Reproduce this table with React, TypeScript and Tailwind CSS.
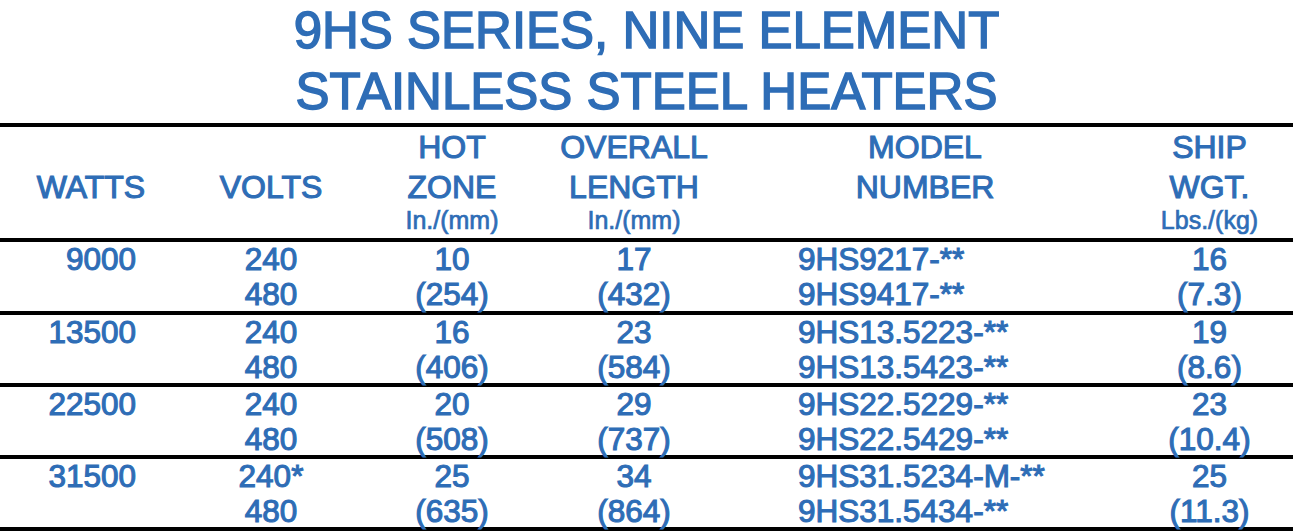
import React from "react";

type Group = {
  watts: string;
  volts: [string, string];
  hot: [string, string];
  overall: [string, string];
  model: [string, string];
  ship: [string, string];
};

const groups: Group[] = [
  { watts: "9000", volts: ["240", "480"], hot: ["10", "(254)"], overall: ["17", "(432)"], model: ["9HS9217-**", "9HS9417-**"], ship: ["16", "(7.3)"] },
  { watts: "13500", volts: ["240", "480"], hot: ["16", "(406)"], overall: ["23", "(584)"], model: ["9HS13.5223-**", "9HS13.5423-**"], ship: ["19", "(8.6)"] },
  { watts: "22500", volts: ["240", "480"], hot: ["20", "(508)"], overall: ["29", "(737)"], model: ["9HS22.5229-**", "9HS22.5429-**"], ship: ["23", "(10.4)"] },
  { watts: "31500", volts: ["240*", "480"], hot: ["25", "(635)"], overall: ["34", "(864)"], model: ["9HS31.5234-M-**", "9HS31.5434-**"], ship: ["25", "(11.3)"] },
];

const cols = "grid grid-cols-[182px_178px_184px_180px_402px_1fr]";

function HeadCell({ l1, l2, l3 }: { l1?: string; l2?: string; l3?: string }) {
  return (
    <div className="flex flex-col items-center">
      <div className="h-[40px] text-[32px] leading-[40px] whitespace-nowrap [-webkit-text-stroke:1.1px_currentColor]">{l1 ?? ""}</div>
      <div className="h-[40px] text-[32px] leading-[40px] whitespace-nowrap [-webkit-text-stroke:1.1px_currentColor]">{l2 ?? ""}</div>
      <div className="h-[27px] text-[25px] leading-[27px] whitespace-nowrap [-webkit-text-stroke:0.7px_currentColor]">{l3 ?? ""}</div>
    </div>
  );
}

function Lines({ items, className }: { items: string[]; className: string }) {
  return (
    <div className={className}>
      {items.map((t, i) => (
        <div key={i} className="h-[35px] leading-[35px] whitespace-nowrap">
          {t}
        </div>
      ))}
    </div>
  );
}

export default function App() {
  return (
    <div className="w-[1293px] h-[531px] overflow-hidden bg-white text-[#2e6db6] font-['Liberation_Sans',Arial,sans-serif]">
      <div className="h-[123px] text-center text-[51px] leading-[61px] [-webkit-text-stroke:1.5px_currentColor]">
        <div>9HS SERIES, NINE ELEMENT</div>
        <div>STAINLESS STEEL HEATERS</div>
      </div>
      <div className={`${cols} h-[115px] border-t-4 border-black`}>
        <HeadCell l2="WATTS" />
        <HeadCell l2="VOLTS" />
        <HeadCell l1="HOT" l2="ZONE" l3="In./(mm)" />
        <HeadCell l1="OVERALL" l2="LENGTH" l3="In./(mm)" />
        <HeadCell l1="MODEL" l2="NUMBER" />
        <HeadCell l1="SHIP" l2="WGT." l3="Lbs./(kg)" />
      </div>
      {groups.map((g, i) => {
        const h =
          i === 0
            ? "h-[73px] border-t-4"
            : i === groups.length - 1
            ? "h-[76px] border-y-4"
            : "h-[72px] border-t-4";
        return (
          <div key={g.watts} className={`${cols} ${h} border-black text-[31.5px] [-webkit-text-stroke:1.1px_currentColor]`}>
            <Lines items={[g.watts]} className="text-right pr-[46px]" />
            <Lines items={g.volts} className="text-center" />
            <Lines items={g.hot} className="text-center" />
            <Lines items={g.overall} className="text-center" />
            <Lines items={g.model} className="text-left pl-[74px]" />
            <Lines items={g.ship} className="text-center" />
          </div>
        );
      })}
    </div>
  );
}
